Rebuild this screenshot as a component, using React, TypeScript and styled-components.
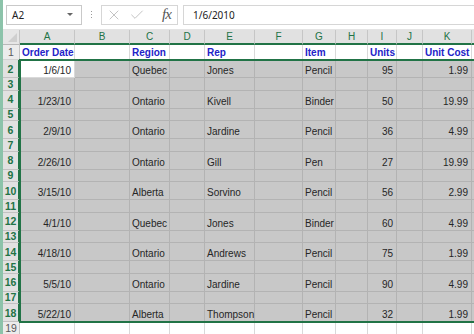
import styled, { createGlobalStyle } from 'styled-components'
import { X, Check } from 'lucide-react'

const GlobalStyle = createGlobalStyle`
  body {
    margin: 0;
    background: #ffffff;
    font-family: "Liberation Sans", Arial, sans-serif;
  }
`

const Window = styled.div`
  width: 474px;
  height: 334px;
  overflow: hidden;
  background: #ffffff;
  border-left: 3px solid #8cc3aa;
  box-sizing: border-box;
  display: flex;
  flex-direction: column;
`

const FormulaBar = styled.div`
  height: 30px;
  flex: none;
  display: flex;
  align-items: center;
  padding: 0 0 0 3px;
  border-bottom: 1px solid #e4e4e4;
  box-sizing: border-box;
  font-family: "Noto Sans", sans-serif;
  font-size: 10px;
  color: #222;
`

const NameBox = styled.div`
  width: 76px;
  height: 20px;
  box-sizing: border-box;
  border: 1px solid #c9c9c9;
  display: flex;
  align-items: center;
  justify-content: space-between;
  padding: 0 8px 0 5px;
`

const Caret = styled.span`
  width: 0;
  height: 0;
  border-left: 3px solid transparent;
  border-right: 3px solid transparent;
  border-top: 3px solid #666;
`

const Dots = styled.div`
  width: 19px;
  display: flex;
  flex-direction: column;
  align-items: center;
  gap: 2px;

  & > span {
    width: 1px;
    height: 1px;
    background: #9a9a9a;
  }
`

const FxGroup = styled.div`
  width: 77px;
  height: 20px;
  box-sizing: border-box;
  border: 1px solid #d6d6d6;
  display: flex;
  align-items: center;
  padding: 0 0 0 4px;
  gap: 7px;
  color: #b4b4b4;
`

const FxLabel = styled.span`
  font-family: "Liberation Serif", "Times New Roman", serif;
  font-style: italic;
  font-size: 15px;
  color: #555;
  margin-left: 10px;
  letter-spacing: -1px;
`

const FormulaInput = styled.div`
  flex: 1;
  height: 20px;
  margin-left: 5px;
  box-sizing: border-box;
  border: 1px solid #d6d6d6;
  border-right: none;
  display: flex;
  align-items: center;
  padding-left: 9px;
`

const Sheet = styled.div`
  flex: 1;
  display: grid;
  grid-template-columns: 17px 55px 55px 40px 35px 50px 48px 33px 32px 29px 26px 49px 1fr;
  grid-template-rows: 15px 15px repeat(8, 18px 12.5px) 18px 1fr;
  font-size: 10px;
`

type Place = { $row: number, $col: number }

const Corner = styled.div`
  grid-row: 1;
  grid-column: 1;
  background: #e6e6e6;
  border-right: 1px solid #c4c4c4;
  border-bottom: 1px solid #b8b8b8;
  position: relative;
  overflow: hidden;

  &::after {
    content: '';
    position: absolute;
    right: 2px;
    bottom: 2px;
    border-left: 9px solid transparent;
    border-bottom: 9px solid #cfcfcf;
  }
`

const ColHeader = styled.div<{ $col: number }>`
  grid-row: 1;
  grid-column: ${p => p.$col};
  background: #e1e1e1;
  color: #217346;
  border-right: 1px solid #c6c6c6;
  border-bottom: 2px solid #217346;
  display: flex;
  align-items: center;
  justify-content: center;
`

const RowHeader = styled.div<{ $row: number, $selected: boolean }>`
  grid-row: ${p => p.$row};
  grid-column: 1;
  background: ${p => (p.$selected ? '#e1e1e1' : '#ececec')};
  color: ${p => (p.$selected ? '#217346' : '#5a5a5a')};
  font-weight: ${p => (p.$selected ? 'bold' : 'normal')};
  border-bottom: 1px solid ${p => (p.$selected ? '#c2c2c2' : '#d2d2d2')};
  border-right: ${p => (p.$selected ? '2px solid #217346' : '1px solid #c4c4c4')};
  display: flex;
  align-items: center;
  justify-content: center;
  font-size: 10.5px;
`

type Tone = 'white' | 'sel' | 'active'

const Cell = styled.div<Place & { $tone: Tone, $align: 'left' | 'right', $bold?: boolean }>`
  grid-row: ${p => p.$row};
  grid-column: ${p => p.$col};
  background: ${p => (p.$tone === 'sel' ? '#c8c8c8' : '#ffffff')};
  border-right: 1px solid ${p => (p.$tone === 'sel' ? '#b3b3b3' : '#d9d9d9')};
  border-bottom: 1px solid ${p => (p.$tone === 'sel' ? '#b3b3b3' : '#d9d9d9')};
  color: ${p => (p.$bold ? '#2323c8' : '#262626')};
  font-weight: ${p => (p.$bold ? 'bold' : 'normal')};
  display: flex;
  align-items: flex-end;
  justify-content: ${p => (p.$align === 'right' ? 'flex-end' : 'flex-start')};
  padding: 0 3px 1px 2px;
  white-space: nowrap;
  min-width: 0;
`

const SelectionFrame = styled.div`
  grid-column: 2 / -1;
  grid-row: 3 / 20;
  border: 2px solid #217346;
  border-right: none;
  margin: -1px 0 -1px -1px;
  pointer-events: none;
  z-index: 1;
`

const columns = ['A', 'B', 'C', 'D', 'E', 'F', 'G', 'H', 'I', 'J', 'K']

const fieldCols: Record<string, { index: number, align: 'left' | 'right' }> = {
  A: { index: 0, align: 'right' },
  C: { index: 1, align: 'left' },
  E: { index: 2, align: 'left' },
  G: { index: 3, align: 'left' },
  I: { index: 4, align: 'right' },
  K: { index: 5, align: 'right' },
}

const headings = ['Order Date', 'Region', 'Rep', 'Item', 'Units', 'Unit Cost']

const orders = [
  ['1/6/10', 'Quebec', 'Jones', 'Pencil', '95', '1.99'],
  ['1/23/10', 'Ontario', 'Kivell', 'Binder', '50', '19.99'],
  ['2/9/10', 'Ontario', 'Jardine', 'Pencil', '36', '4.99'],
  ['2/26/10', 'Ontario', 'Gill', 'Pen', '27', '19.99'],
  ['3/15/10', 'Alberta', 'Sorvino', 'Pencil', '56', '2.99'],
  ['4/1/10', 'Quebec', 'Jones', 'Binder', '60', '4.99'],
  ['4/18/10', 'Ontario', 'Andrews', 'Pencil', '75', '1.99'],
  ['5/5/10', 'Ontario', 'Jardine', 'Pencil', '90', '4.99'],
  ['5/22/10', 'Alberta', 'Thompson', 'Pencil', '32', '1.99'],
]

function rowValues(row: number): string[] | null {
  if (row === 1) return headings
  if (row >= 2 && row <= 18 && row % 2 === 0) return orders[row / 2 - 1]
  return null
}

export default function App() {
  const rows = Array.from({ length: 19 }, (_, i) => i + 1)

  return (
    <>
      <GlobalStyle />
      <Window>
        <FormulaBar>
          <NameBox>
            <span>A2</span>
            <Caret />
          </NameBox>
          <Dots>
            <span />
            <span />
            <span />
          </Dots>
          <FxGroup>
            <X size={16} strokeWidth={1.2} />
            <Check size={16} strokeWidth={1.2} />
            <FxLabel>fx</FxLabel>
          </FxGroup>
          <FormulaInput>1/6/2010</FormulaInput>
        </FormulaBar>

        <Sheet>
          <Corner />
          {columns.map((c, i) => (
            <ColHeader key={c} $col={i + 2}>{c}</ColHeader>
          ))}
          <ColHeader $col={columns.length + 2} />

          {rows.map(r => {
            const values = rowValues(r)
            const inSelection = r >= 2 && r <= 18
            const gridRow = r + 1
            return [
              <RowHeader key={`h${r}`} $row={gridRow} $selected={inSelection}>{r}</RowHeader>,
              ...columns.map((c, i) => {
                const field = fieldCols[c]
                const tone: Tone = r === 2 && c === 'A' ? 'active' : inSelection ? 'sel' : 'white'
                return (
                  <Cell
                    key={`${c}${r}`}
                    $row={gridRow}
                    $col={i + 2}
                    $tone={tone}
                    $align={r === 1 ? 'left' : field?.align ?? 'left'}
                    $bold={r === 1}
                  >
                    {field && values ? values[field.index] : null}
                  </Cell>
                )
              }),
              <Cell
                key={`L${r}`}
                $row={gridRow}
                $col={columns.length + 2}
                $tone={inSelection ? 'sel' : 'white'}
                $align="left"
              />,
            ]
          })}

          <SelectionFrame />
        </Sheet>
      </Window>
    </>
  )
}
